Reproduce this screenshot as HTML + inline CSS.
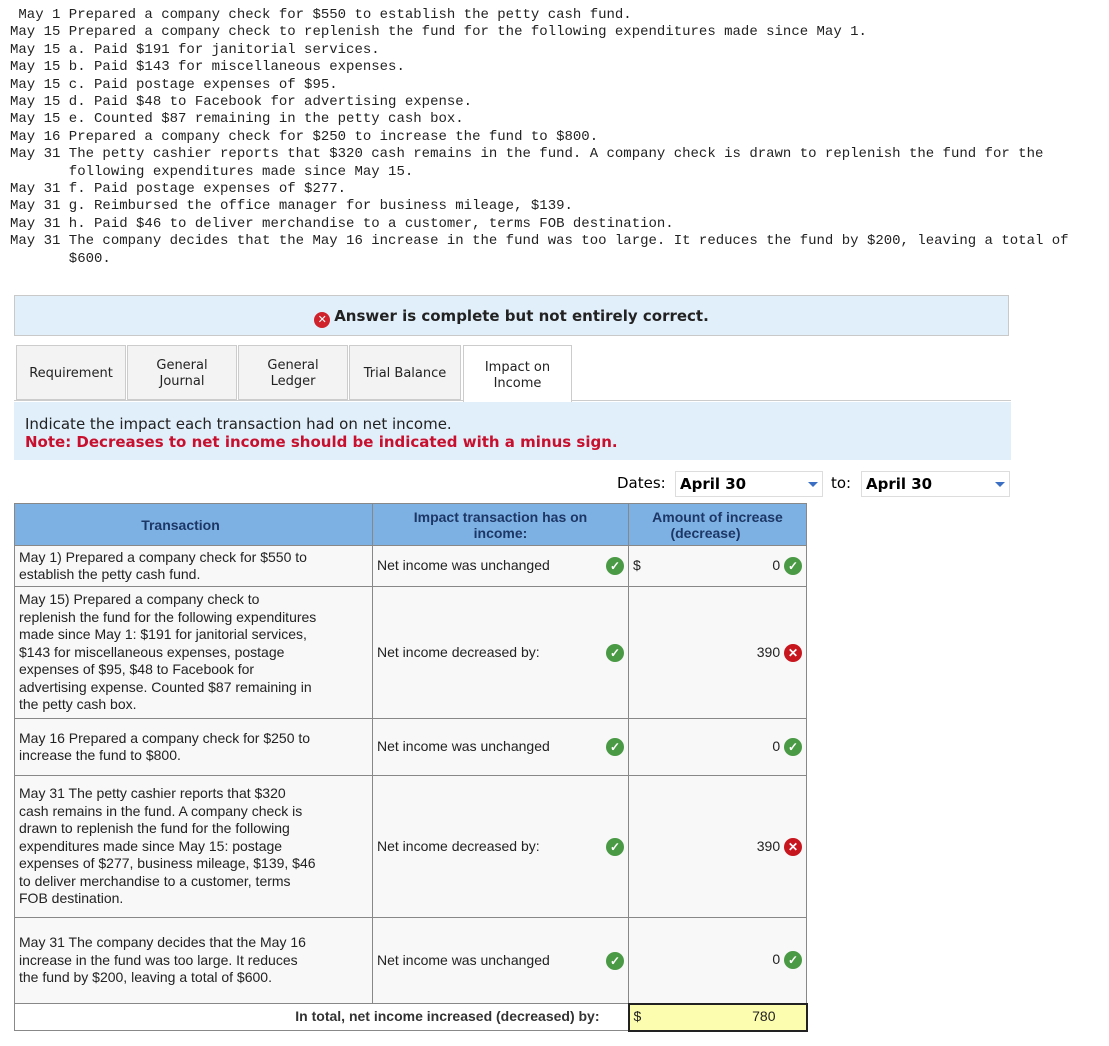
<!DOCTYPE html>
<html><head><meta charset="utf-8"><style>
body{margin:0;width:1109px;height:1046px;background:#fff;position:relative;overflow:hidden;font-family:"Liberation Sans",Arial,sans-serif;}
.mono{position:absolute;left:10px;top:7px;font-family:"Liberation Mono",monospace;font-size:14px;line-height:17.4px;color:#222;white-space:pre;}
.abs{position:absolute;}
.banner{left:14px;top:295px;width:995px;height:41px;background:#e1effa;border:1px solid #c9c9c9;box-sizing:border-box;text-align:center;font-family:"DejaVu Sans",sans-serif;font-weight:bold;font-size:15px;line-height:40px;color:#222;}
.x{display:inline-block;width:16px;height:16px;border-radius:50%;background:#d0222b;color:#fff;font-size:11px;line-height:16px;text-align:center;vertical-align:-2px;margin-right:4px;}
.ok{display:inline-block;width:18px;height:18px;border-radius:50%;background:#4a9a45;color:#fff;font-size:12px;line-height:18px;text-align:center;font-weight:bold;}
.bad{display:inline-block;width:18px;height:18px;border-radius:50%;background:#c8161e;color:#fff;font-size:12px;line-height:18px;text-align:center;font-weight:bold;}
.tab{position:absolute;top:345px;height:55px;background:#f3f3f3;border:1px solid #ccc;box-sizing:border-box;font-family:"DejaVu Sans",sans-serif;font-size:13px;color:#222;display:flex;align-items:center;justify-content:center;text-align:center;line-height:16px;padding-top:3px;}
.tab.act{background:#fff;border-bottom:none;height:57px;}
.instr{left:14px;top:402px;width:997px;height:58px;background:#e1effa;font-family:"DejaVu Sans",sans-serif;font-size:15px;line-height:18px;padding:13px 0 0 11px;box-sizing:border-box;color:#222;}
.sel{position:absolute;top:471px;height:26px;border:1px solid #ddd;background:#fff;box-sizing:border-box;font-family:"DejaVu Sans",sans-serif;font-weight:bold;font-size:15px;line-height:24px;padding-left:4px;}
.arr{position:absolute;right:4px;top:10px;width:0;height:0;border-left:5px solid transparent;border-right:5px solid transparent;border-top:5px solid #3a6fc4;}
table{position:absolute;left:14px;top:503px;border-collapse:collapse;font-size:14px;color:#222;}
td,th{border:1px solid #888;padding:0 4px;vertical-align:middle;}
th{background:#7eb1e3;color:#1c3766;font-size:14px;line-height:16px;height:41px;}
td{background:#f8f8f8;line-height:17.5px;}
.r{text-align:right;}
</style></head><body>
<div class="mono"> May 1 Prepared a company check for $550 to establish the petty cash fund.
May 15 Prepared a company check to replenish the fund for the following expenditures made since May 1.
May 15 a. Paid $191 for janitorial services.
May 15 b. Paid $143 for miscellaneous expenses.
May 15 c. Paid postage expenses of $95.
May 15 d. Paid $48 to Facebook for advertising expense.
May 15 e. Counted $87 remaining in the petty cash box.
May 16 Prepared a company check for $250 to increase the fund to $800.
May 31 The petty cashier reports that $320 cash remains in the fund. A company check is drawn to replenish the fund for the
       following expenditures made since May 15.
May 31 f. Paid postage expenses of $277.
May 31 g. Reimbursed the office manager for business mileage, $139.
May 31 h. Paid $46 to deliver merchandise to a customer, terms FOB destination.
May 31 The company decides that the May 16 increase in the fund was too large. It reduces the fund by $200, leaving a total of
       $600.</div>
<div class="abs banner"><span class="x">✕</span>Answer is complete but not entirely correct.</div>
<div class="abs" style="left:14px;top:400px;width:997px;height:1px;background:#ccc"></div>
<div class="tab" style="left:16px;width:110px">Requirement</div>
<div class="tab" style="left:127px;width:110px">General<br>Journal</div>
<div class="tab" style="left:238px;width:110px">General<br>Ledger</div>
<div class="tab" style="left:349px;width:112px">Trial Balance</div>
<div class="tab act" style="left:463px;width:109px">Impact on<br>Income</div>
<div class="abs instr">Indicate the impact each transaction had on net income.<br><b style="color:#c8102e">Note: Decreases to net income should be indicated with a minus sign.</b></div>
<div class="abs" style="left:617px;top:474px;font-family:'DejaVu Sans',sans-serif;font-size:15px">Dates:</div>
<div class="sel" style="left:675px;width:148px">April 30<span class="arr"></span></div>
<div class="abs" style="left:831px;top:474px;font-family:'DejaVu Sans',sans-serif;font-size:15px">to:</div>
<div class="sel" style="left:861px;width:149px">April 30<span class="arr"></span></div>
<table>
<tr><th style="width:349px"><span style="margin-right:26px">Transaction</span></th><th style="width:247px">Impact transaction has on<br>income:</th><th style="width:169px"><span style="margin-right:24px">Amount of increase<br>(decrease)</span></th></tr>
<tr style="height:41px"><td>May 1) Prepared a company check for $550 to<br>establish the petty cash fund.</td><td>Net income was unchanged<span class="ok" style="float:right">✓</span></td><td>$<span style="float:right">0 <span class="ok">✓</span></span></td></tr>
<tr style="height:132px"><td>May 15) Prepared a company check to<br>replenish the fund for the following expenditures<br>made since May 1: $191 for janitorial services,<br>$143 for miscellaneous expenses, postage<br>expenses of $95, $48 to Facebook for<br>advertising expense. Counted $87 remaining in<br>the petty cash box.</td><td>Net income decreased by:<span class="ok" style="float:right">✓</span></td><td class="r">390 <span class="bad">✕</span></td></tr>
<tr style="height:57px"><td>May 16 Prepared a company check for $250 to<br>increase the fund to $800.</td><td>Net income was unchanged<span class="ok" style="float:right">✓</span></td><td class="r">0 <span class="ok">✓</span></td></tr>
<tr style="height:142px"><td>May 31 The petty cashier reports that $320<br>cash remains in the fund. A company check is<br>drawn to replenish the fund for the following<br>expenditures made since May 15: postage<br>expenses of $277, business mileage, $139, $46<br>to deliver merchandise to a customer, terms<br>FOB destination.</td><td>Net income decreased by:<span class="ok" style="float:right">✓</span></td><td class="r">390 <span class="bad">✕</span></td></tr>
<tr style="height:86px"><td>May 31 The company decides that the May 16<br>increase in the fund was too large. It reduces<br>the fund by $200, leaving a total of $600.</td><td>Net income was unchanged<span class="ok" style="float:right">✓</span></td><td class="r">0 <span class="ok">✓</span></td></tr>
<tr style="height:27px"><td colspan="2" style="background:#fff;text-align:right;font-weight:bold;color:#333;padding-right:28px">In total, net income increased (decreased) by:</td><td style="background:#fdfdb0;border:2px solid #222">$<span style="float:right;margin-right:26px">780</span></td></tr>
</table>
</body></html>
